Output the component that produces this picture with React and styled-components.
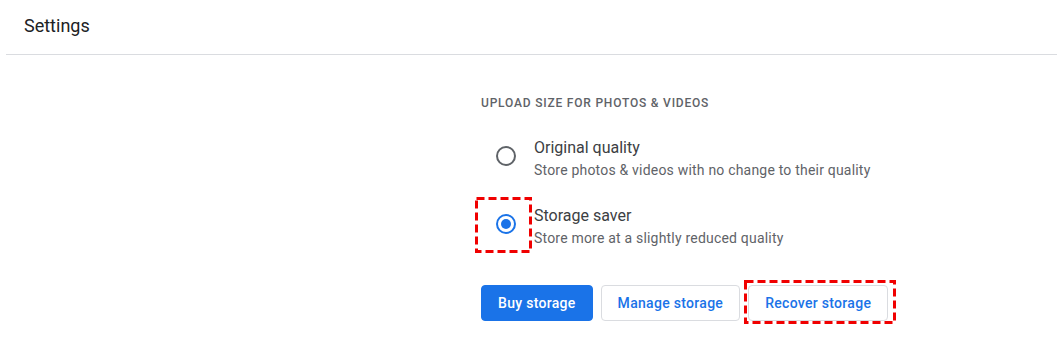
import React from "react";
import styled, { createGlobalStyle } from "styled-components";

const Global = createGlobalStyle`
  html, body { margin: 0; padding: 0; background: #fff; }
  body { font-family: Roboto, "Liberation Sans", Arial, sans-serif; }
`;

const Page = styled.div`
  width: 1058px;
  height: 344px;
  background: #fff;
`;

const Header = styled.header`
  height: 54px;
  margin: 0 1px 0 6px;
  padding-left: 18px;
  display: flex;
  align-items: center;
  border-bottom: 1px solid #dadce0;
  box-sizing: content-box;
`;

const Title = styled.h1`
  margin: 0;
  font-size: 18px;
  font-weight: 400;
  color: #202124;
  line-height: 24px;
  position: relative;
  top: -1px;
`;

const Content = styled.section`
  padding: 40px 0 0 481px;
  display: flex;
  flex-direction: column;
`;

const SectionLabel = styled.h2`
  margin: 0;
  font-size: 12px;
  line-height: 16px;
  font-weight: 500;
  letter-spacing: 0.8px;
  text-transform: uppercase;
  color: #5f6368;
`;

const Options = styled.div`
  display: flex;
  flex-direction: column;
  gap: 20px;
  margin-top: 21px;
  margin-left: 1px;
`;

const Option = styled.label`
  display: flex;
  align-items: center;
  height: 48px;
  cursor: pointer;
`;

const RadioCell = styled.span`
  position: relative;
  width: 48px;
  height: 48px;
  display: flex;
  align-items: center;
  justify-content: center;
  flex: none;
  margin-right: 4px;
`;

const RadioRing = styled.span`
  width: 20px;
  height: 20px;
  box-sizing: border-box;
  border-radius: 50%;
  border: 2px solid ${(p) => (p.$checked ? "#1a73e8" : "#5f6368")};
  display: flex;
  align-items: center;
  justify-content: center;
  &::after {
    content: "";
    width: 10px;
    height: 10px;
    border-radius: 50%;
    background: #1a73e8;
    display: ${(p) => (p.$checked ? "block" : "none")};
  }
`;

const AnnotationBox = styled.svg`
  position: absolute;
  pointer-events: none;
  overflow: visible;
  left: ${(p) => p.$l}px;
  top: ${(p) => p.$t}px;
`;

function Annotation({ l, t, w, h }) {
  return (
    <AnnotationBox $l={l} $t={t} width={w} height={h}>
      <rect
        x="1.5"
        y="1.5"
        width={w - 3}
        height={h - 3}
        fill="none"
        stroke="#f00000"
        strokeWidth="3"
        strokeDasharray="8 4"
      />
    </AnnotationBox>
  );
}

const OptionText = styled.span`
  display: flex;
  flex-direction: column;
  padding-top: 4px;
`;

const OptionTitle = styled.span`
  font-size: 16px;
  line-height: 24px;
  color: #3c4043;
`;

const OptionSub = styled.span`
  font-size: 14px;
  line-height: 20px;
  letter-spacing: 0.2px;
  color: #5f6368;
`;

const Actions = styled.div`
  display: flex;
  gap: 8px;
  margin-top: 37px;
`;

const ButtonWrap = styled.span`
  position: relative;
  display: inline-flex;
`;

const Button = styled.button`
  height: 36px;
  padding: 0 16px;
  border-radius: 4px;
  font-family: Roboto, "Liberation Sans", Arial, sans-serif;
  font-size: 14px;
  font-weight: 500;
  letter-spacing: 0.3px;
  cursor: pointer;
  border: 1px solid ${(p) => (p.$primary ? "#1a73e8" : "#dadce0")};
  background: ${(p) => (p.$primary ? "#1a73e8" : "#fff")};
  color: ${(p) => (p.$primary ? "#fff" : "#1a73e8")};
`;

export default function App() {
  return (
    <Page>
      <Global />
      <Header>
        <Title>Settings</Title>
      </Header>
      <Content>
        <SectionLabel>Upload size for photos &amp; videos</SectionLabel>
        <Options>
          <Option>
            <RadioCell>
              <RadioRing />
            </RadioCell>
            <OptionText>
              <OptionTitle>Original quality</OptionTitle>
              <OptionSub>Store photos &amp; videos with no change to their quality</OptionSub>
            </OptionText>
          </Option>
          <Option>
            <RadioCell>
              <RadioRing $checked />
              <Annotation l={-7} t={-3} w={57} h={56} />
            </RadioCell>
            <OptionText>
              <OptionTitle>Storage saver</OptionTitle>
              <OptionSub>Store more at a slightly reduced quality</OptionSub>
            </OptionText>
          </Option>
        </Options>
        <Actions>
          <Button $primary>Buy storage</Button>
          <Button>Manage storage</Button>
          <ButtonWrap>
            <Button>Recover storage</Button>
            <Annotation l={-4} t={-5} w={152} h={44} />
          </ButtonWrap>
        </Actions>
      </Content>
    </Page>
  );
}
